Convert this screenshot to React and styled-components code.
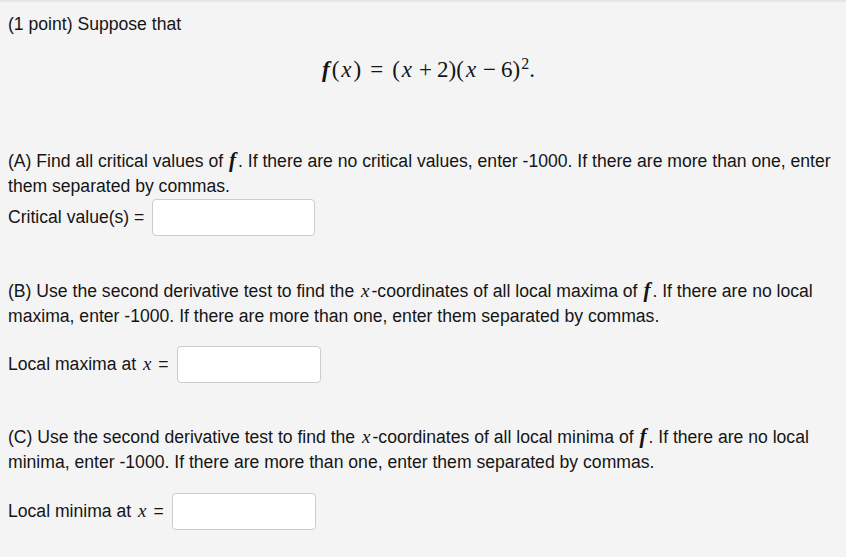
import React from 'react'
import styled, { createGlobalStyle } from 'styled-components'

const GlobalStyle = createGlobalStyle`
  html, body {
    margin: 0;
    padding: 0;
    background: #f4f4f4;
  }
  body {
    font-family: "Liberation Sans", Arial, sans-serif;
    font-size: 17.6px;
    color: #151515;
  }
`

const Page = styled.div`
  border-top: 2px solid #e6e6e6;
  padding: 10px 8px 20px 8px;
  width: 830px;
  box-sizing: content-box;
`

const Para = styled.p`
  margin: 0;
  margin-top: ${props => props.top || 0}px;
  line-height: 25px;
`

const Display = styled.div`
  margin-top: 18px;
  height: 30px;
  line-height: 30px;
  text-align: center;
  font-family: "Liberation Serif", "Times New Roman", serif;
  font-size: 23px;
  padding-left: 10px;
  white-space: nowrap;
`

const Var = styled.i`
  font-family: "Liberation Serif", "Times New Roman", serif;
  font-style: italic;
  font-size: ${props => props.size || 19}px;
  font-weight: ${props => props.bold ? 600 : 400};
  margin: 0 2px 0 ${props => props.bold ? 1 : 2}px;
  line-height: 1;
`

const Op = styled.span`
  margin: 0 ${props => props.space || 5}px;
`

const Sup = styled.sup`
  font-size: 16px;
  vertical-align: 8px;
  line-height: 0;
  margin-left: 1px;
`

const AnswerRow = styled.div`
  display: flex;
  align-items: center;
  gap: 8px;
  margin-top: ${props => props.top || 0}px;
`

const Label = styled.span`
  line-height: 25px;
`

const Box = styled.input`
  width: ${props => props.w}px;
  height: 37px;
  box-sizing: border-box;
  border: 1px solid #cccccc;
  border-radius: 4px;
  background: #fff;
  margin: 0;
  padding: 4px 6px;
  font-size: 16px;
`

export default function App() {
  return (
    <>
      <GlobalStyle />
      <Page>
        <Para>(1 point) Suppose that</Para>
        <Display>
          <Var size={23} bold>f</Var>(<Var size={23}>x</Var>)<Op space={9}>=</Op>(<Var size={23}>x</Var><Op>+</Op>2)(<Var size={23}>x</Var><Op>−</Op>6)<Sup>2</Sup>.
        </Display>

        <Para top={64}>
          (A) Find all critical values of <Var size={21} bold>f</Var>. If there are no critical values, enter -1000. If there are more than one, enter them separated by commas.
        </Para>
        <AnswerRow>
          <Label>Critical value(s) =</Label>
          <Box w={163} />
        </AnswerRow>

        <Para top={43}>
          (B) Use the second derivative test to find the <Var>x</Var>-coordinates of all local maxima of <Var size={21} bold>f</Var>. If there are no local maxima, enter -1000. If there are more than one, enter them separated by commas.
        </Para>
        <AnswerRow top={17}>
          <Label>Local maxima at <Var>x</Var> =</Label>
          <Box w={144} />
        </AnswerRow>

        <Para top={42}>
          (C) Use the second derivative test to find the <Var>x</Var>-coordinates of all local minima of <Var size={21} bold>f</Var>. If there are no local minima, enter -1000. If there are more than one, enter them separated by commas.
        </Para>
        <AnswerRow top={18}>
          <Label>Local minima at <Var>x</Var> =</Label>
          <Box w={144} />
        </AnswerRow>
      </Page>
    </>
  )
}
